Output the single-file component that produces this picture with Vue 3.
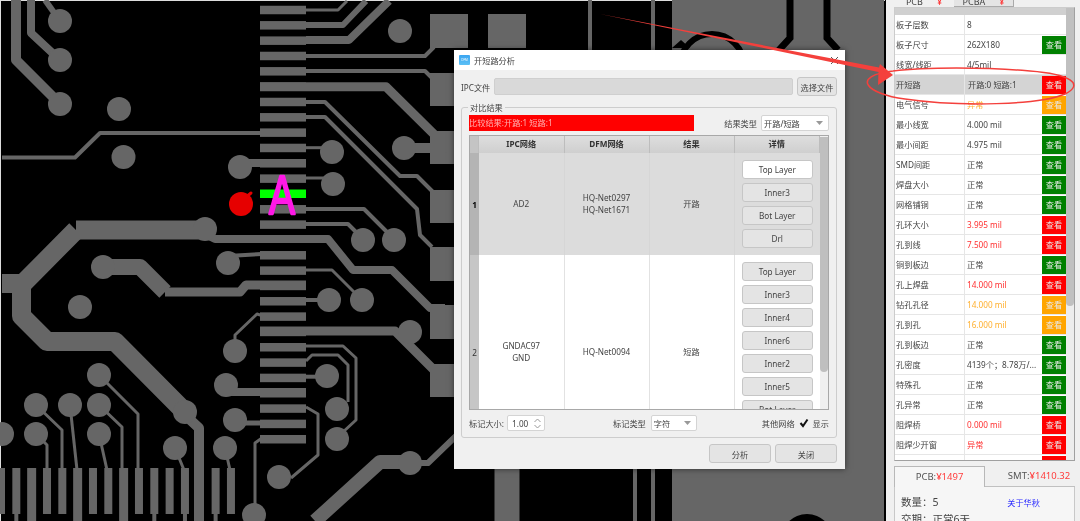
<script setup>
const gray = '#666666'

// pads on the vertical connector, pitch 15.33
const padRows = []
for (let i = 0; i < 29; i++) {
  if (i === 15 || i === 12) continue
  padRows.push(10 + i * 15.33)
}

// pads along the bottom edge
const bottomPads = []
for (let i = 0; i < 16; i++) {
  if (i === 13) continue
  const long = [1, 2, 5, 8, 10, 12, 14].includes(i)
  const wide = [2, 5, 8].includes(i)
  bottomPads.push({ x: 1 + i * 15.33, long, wide })
}

const vias = [
  [60, 21], [60, 60], [60, 104], [119, 109], [123.5, 157], [240, 167], [400, 31], [404, 148],
  [332, 152], [333, 184], [363, 240], [394, 240], [103, 267], [205, 229], [228, 263], [80, 307],
  [329, 300], [362, 300], [410, 332], [235, 351], [327, 376], [226, 385], [337, 409], [337, 439],
  [235, 420], [279, 477], [254, 515], [99, 375], [36, 405], [70, 405], [99, 405], [36, 434],
  [99, 434], [2, 434], [175, 448], [225, 448], [410, 463], [185, 412],
]

const traces = [
  [10, '16,0 16,60 60,104'],
  [8, '31,0 31,33 60,60'],
  [6, '45,0 60,21'],
  [4, '2,157.5 75,157.5 100,133 262,133'],
  [8, '240,163 306,163'],
  [3, '306,178 333,178'],
  [3, '306,147.7 332,147.7'],
  [3, '306,10 338,10 347,1'],
  [6, '306,25 343,25 366,1'],
  [8, '306,40 349,40 389,1'],
  [4, '306,56 425,56 434,47'],
  [4, '306,71 425,71 432,78'],
  [9, '260,86.7 386,86.7 456,156'],
  [10, '404,148 440,148'],
  [4, '306,102 325,102 400,176 417,176 433,192 445,192'],
  [4, '306,117 325,117 417,209 420,235 432,247'],
  [4, '306,209 364,209 388,233'],
  [4, '306,224 348,224 358,234'],
  [19, '76,230 21.5,285 21.5,316 47,341.5 115,341.5 185,412'],
  [19, '76,230 205,230'],
  [19, '2,283.5 25,283.5'],
  [8, '205,234 215,239 328,239 353,270 392,270 430,308 445,308'],
  [10, '185,415 199,428 199,521'],
  [16, '103,267 140,267 165,292'],
  [9, '165,292 240,292 246,285 306,285'],
  [4, '228,256 262,254'],
  [3, '306,270 332,270 362,300'],
  [4, '306,300 329,300'],
  [3, '262,315.7 257,314 235,335 235,345'],
  [9, '260,331 395,331 440,376'],
  [3, '306,346 343,346 356,358 356,420 343,432'],
  [3, '306,361 312,355 338,355 348,365 348,402'],
  [4, '306,376.7 327,376.7'],
  [8, '226,392 306,392'],
  [3, '306,407 318,414 318,455 291,478'],
  [5, '235,423 262,423'],
  [3, '262,438 255,443 255,505'],
  [3, '36,405 62,430 62,470'],
  [3, '36,434 47,445 47,470'],
  [3, '70,405 77,470'],
  [3, '99,405 122,427 122,470'],
  [3, '99,434 107,470'],
  [3, '99,375 138,414 138,470'],
  [3, '175,448 184,470'],
  [3, '225,448 230,470'],
  [14, '315,521 380,462 410,462'],
  [6, '410,463 428,463 456,436'],
  [4, '590,0 590,50'],
  [4, '653,0 653,50'],
  [4, '635,469 635,521'],
  [4, '653,469 653,521'],
  [25, '507,469 507,521'],
]

const blocks = [
  [430, 15, 30, 33], [430, 73, 30, 33], [430, 131, 30, 33], [430, 190, 30, 33], [430, 247, 30, 34],
  [430, 305, 30, 34], [430, 364, 30, 33], [430, 14, 38, 34], [488, 14, 38, 34],
]

const tableRows = [
  { no: 1, ipc: ['AD2'], dfm: ['HQ-Net0297', 'HQ-Net1671'], result: '开路', layers: ['Top Layer', 'Inner3', 'Bot Layer', 'Drl'] },
  { no: 2, ipc: ['GNDAC97', 'GND'], dfm: ['HQ-Net0094'], result: '短路', layers: ['Top Layer', 'Inner3', 'Inner4', 'Inner6', 'Inner2', 'Inner5', 'Bot Layer', 'Drl'] },
]

const checks = [
  { name: '板子层数', value: '8' },
  { name: '板子尺寸', value: '262X180', btn: 'green' },
  { name: '线宽/线距', value: '4/5mil' },
  { name: '开短路', value: '开路:0 短路:1', btn: 'red', active: true },
  { name: '电气信号', value: '异常', btn: 'orange', tone: 'orange' },
  { name: '最小线宽', value: '4.000 mil', btn: 'green' },
  { name: '最小间距', value: '4.975 mil', btn: 'green' },
  { name: 'SMD间距', value: '正常', btn: 'green' },
  { name: '焊盘大小', value: '正常', btn: 'green' },
  { name: '网格铺铜', value: '正常', btn: 'green' },
  { name: '孔环大小', value: '3.995 mil', btn: 'red', tone: 'red' },
  { name: '孔到线', value: '7.500 mil', btn: 'red', tone: 'red' },
  { name: '铜到板边', value: '正常', btn: 'green' },
  { name: '孔上焊盘', value: '14.000 mil', btn: 'red', tone: 'red' },
  { name: '钻孔孔径', value: '14.000 mil', btn: 'orange', tone: 'orange' },
  { name: '孔到孔', value: '16.000 mil', btn: 'orange', tone: 'orange' },
  { name: '孔到板边', value: '正常', btn: 'green' },
  { name: '孔密度', value: '4139个；8.78万/...', btn: 'green' },
  { name: '特殊孔', value: '正常', btn: 'green' },
  { name: '孔异常', value: '正常', btn: 'green' },
  { name: '阻焊桥', value: '0.000 mil', btn: 'red', tone: 'red' },
  { name: '阻焊少开窗', value: '异常', btn: 'red', tone: 'red' },
  { name: '', value: '', btn: 'red', tone: 'red' },
]
</script>

<template>
  <div class="app">
    <div class="canvas">
      <svg class="board" width="885" height="521" viewBox="0 0 885 521">
        <rect x="672" y="0" width="212" height="521" :fill="gray" />
        <rect v-for="b in blocks" :key="b.join()" :x="b[0]" :y="b[1]" :width="b[2]" :height="b[3]" :fill="gray" />
        <polyline
          v-for="t in traces"
          :key="t[1]"
          :points="t[1]"
          :stroke-width="t[0]"
          :stroke="gray"
          fill="none"
          stroke-linejoin="round" />
        <circle v-for="v in vias" :key="v.join()" :cx="v[0]" :cy="v[1]" r="12" :fill="gray" />
        <rect v-for="y in padRows" :key="y" x="260" :y="y - 4.25" width="46" height="8.5" :fill="gray" />
        <template v-for="p in bottomPads" :key="p.x">
          <rect :x="p.x - (p.wide ? 4.5 : 4)" y="468" :width="p.wide ? 9 : 8" height="46" :fill="gray" />
          <rect v-if="p.long" :x="p.x - (p.wide ? 4.5 : 2)" y="514" :width="p.wide ? 9 : 4" height="7" :fill="gray" />
        </template>
        <!-- copper pour cut-outs on the right -->
        <circle cx="712" cy="66" r="32" fill="none" stroke="#000" stroke-width="6" />
        <polyline points="790,0 790,38 779,50" fill="none" stroke="#000" stroke-width="7" />
        <polyline points="827,0 827,38 838,50" fill="none" stroke="#000" stroke-width="7" />
        <circle cx="807" cy="540" r="26" fill="#000" />
        <polygon points="672,48 690,48 681,40" fill="#000" />
        <rect x="260" y="189.5" width="46" height="8.5" fill="#00ff00" />
        <circle cx="241" cy="204" r="12" fill="#e60000" />
        <line x1="245" y1="198" x2="251" y2="193" stroke="#e60000" stroke-width="3" stroke-linecap="round" />
        <text x="269" y="214" class="mark" textLength="26" lengthAdjust="spacingAndGlyphs">A</text>
      </svg>

      <div class="dialog">
        <div class="titlebar">
          <span class="app-icon">DFM</span>
          <span class="title">开短路分析</span>
          <svg class="close" width="9" height="9" viewBox="0 0 9 9">
            <path d="M1 1 L8 8 M8 1 L1 8" stroke="#555" stroke-width="1" fill="none" />
          </svg>
        </div>
        <div class="dialog-body">
          <div class="file-row">
            <span class="lbl file-lbl">IPC文件</span>
            <div class="file-input"></div>
            <button class="btn file-btn">选择文件</button>
          </div>
          <div class="group">
            <span class="group-title">对比结果</span>
            <div class="result-row">
              <div class="result-bar">比较结果:开路:1 短路:1</div>
              <span class="lbl result-label">结果类型</span>
              <div class="select result-select">
                <span>开路/短路</span>
                <svg width="7" height="4" viewBox="0 0 7 4"><path d="M0 0 H7 L3.5 4 Z" fill="#999" /></svg>
              </div>
            </div>
            <div class="table">
              <div class="table-main">
                <div class="thead">
                  <div class="corner"></div>
                  <div>IPC网络</div>
                  <div>DFM网络</div>
                  <div>结果</div>
                  <div>详情</div>
                </div>
                <div class="tbody">
                  <div v-for="row in tableRows" :key="row.no" class="trow" :class="{ selected: row.no === 1 }">
                    <div class="rowhead">{{ row.no }}</div>
                    <div class="cell"><span v-for="n in row.ipc" :key="n">{{ n }}</span></div>
                    <div class="cell"><span v-for="n in row.dfm" :key="n">{{ n }}</span></div>
                    <div class="cell">{{ row.result }}</div>
                    <div class="cell layers">
                      <button
                        v-for="(l, i) in row.layers"
                        :key="l"
                        class="btn layer-btn"
                        :class="{ current: row.no === 1 && i === 0 }">{{ l }}</button>
                    </div>
                  </div>
                </div>
              </div>
              <div class="scrollbar"><div class="thumb"></div></div>
            </div>
            <div class="footer-row">
              <span class="lbl size-lbl">标记大小:</span>
              <div class="select spin">
                <span>1.00</span>
                <svg width="7" height="11" viewBox="0 0 7 11"><path d="M0.5 4 L3.5 1 L6.5 4 M0.5 7 L3.5 10 L6.5 7" stroke="#999" fill="none" /></svg>
              </div>
              <span class="lbl mark-type">标记类型</span>
              <div class="select mark-select">
                <span>字符</span>
                <svg width="7" height="4" viewBox="0 0 7 4"><path d="M0 0 H7 L3.5 4 Z" fill="#999" /></svg>
              </div>
              <span class="lbl other">其他网络</span>
              <svg class="check" width="10" height="10" viewBox="0 0 10 10">
                <path d="M1.5 5 L4 8 L8.5 1.5" stroke="#111" stroke-width="2" fill="none" />
              </svg>
              <span class="lbl">显示</span>
            </div>
          </div>
          <div class="actions">
            <button class="btn action-btn">分析</button>
            <button class="btn action-btn">关闭</button>
          </div>
        </div>
      </div>
    </div>

    <div class="panel">
      <div class="top-tabs">
        <div class="top-tab">PCB<em>¥</em></div>
        <div class="top-tab raised">PCBA<em>¥</em></div>
      </div>
      <div class="check-box">
        <div class="check-main">
          <div class="check-head"></div>
          <div class="check-rows">
            <div v-for="c in checks" :key="c.name" class="check-row" :class="{ active: c.active }">
              <div class="check-name">{{ c.name }}</div>
              <div class="check-value" :class="c.tone">{{ c.value }}</div>
              <div class="check-action">
                <span v-if="c.btn" class="view" :class="c.btn">查看</span>
              </div>
            </div>
          </div>
        </div>
        <div class="check-scroll"><div class="check-thumb"></div></div>
      </div>
      <div class="price-tabs">
        <div class="price-tab on">PCB:<em>¥1497</em></div>
        <div class="price-tab smt">SMT:<em>¥1410.32</em></div>
      </div>
      <div class="price-box">
        <div class="qty-row">
          <span>数量：5</span>
          <a class="about">关于华秋</a>
        </div>
        <div class="qty-row">交期：正常6天</div>
      </div>
    </div>

    <svg class="annotation" width="1080" height="521" viewBox="0 0 1080 521">
      <polygon points="600,14 879,67.5 880,64 893,75 878,85 878.5,72" fill="#f4403c" />
      <path
        d="M893 71 C 850 76, 866 94, 905 99 C 960 107, 1040 105, 1065 94 C 1085 84, 1070 74, 1030 71 C 985 67, 925 67, 893 71"
        fill="none"
        stroke="#f4403c"
        stroke-width="1.5" />
    </svg>
  </div>
</template>

<style>
html, body {
  margin: 0;
  background: #f0f0f0;
}
</style>

<style scoped>
.app {
  position: relative;
  display: flex;
  width: 1080px;
  height: 521px;
  overflow: hidden;
  font-family: "Noto Sans", "Noto Sans CJK SC", sans-serif;
  font-size: 8.2px;
  color: #333;
  filter: blur(0.45px);
}

.canvas {
  position: relative;
  flex: 0 0 885px;
  height: 521px;
  background: #000;
  border-right: 1px solid #000;
  box-sizing: border-box;
  box-shadow: inset 1px 1px 0 #ddd;
}

.board {
  display: block;
}

.mark {
  font-family: "Liberation Sans", sans-serif;
  font-size: 55px;
  fill: #ff19e6;
  stroke: #ff19e6;
  stroke-width: 2.5px;
  stroke-linejoin: round;
}

.annotation {
  position: absolute;
  left: 0;
  top: 0;
  pointer-events: none;
}

.dialog {
  position: absolute;
  left: 454px;
  top: 50px;
  width: 391px;
  height: 419px;
  background: #f0f0f0;
  box-shadow: 0 0 6px rgba(0, 0, 0, 0.55);
  display: flex;
  flex-direction: column;
}

.titlebar {
  height: 20px;
  flex: none;
  background: #fff;
  display: flex;
  align-items: center;
  padding: 0 5px;
  gap: 4px;
}

.app-icon {
  width: 11px;
  height: 10px;
  background: linear-gradient(#3ba5f0, #5cc0f5);
  border-radius: 1px;
  color: #fff;
  font-size: 3px;
  line-height: 10px;
  text-align: center;
}

.title {
  font-size: 8.2px;
  color: #444;
}

.close {
  margin-left: auto;
  margin-right: 1px;
}

.dialog-body {
  flex: 1;
  padding: 7px 8px 0 7px;
  display: flex;
  flex-direction: column;
}

.lbl {
  white-space: nowrap;
  font-size: 8.2px;
  color: #444;
}

.file-row {
  display: flex;
  align-items: center;
  height: 19px;
}

.file-lbl {
  flex: 0 0 33px;
}

.file-input {
  flex: 1;
  height: 17px;
  background: #d9d9d9;
  border: 1px solid #cfcfcf;
  border-radius: 2px;
  box-sizing: border-box;
}

.btn {
  font: inherit;
  color: #444;
  background: #e4e4e4;
  border: 1px solid #c6c6c6;
  border-radius: 3px;
  padding: 0;
  box-sizing: border-box;
}

.file-btn {
  flex: 0 0 40px;
  height: 19px;
  margin-left: 4px;
}

.group {
  position: relative;
  margin-top: 11px;
  height: 331px;
  box-sizing: border-box;
  border: 1px solid #cdcdcd;
  border-radius: 3px;
  padding: 7px 7px 0;
  display: flex;
  flex-direction: column;
}

.group-title {
  position: absolute;
  left: 6px;
  top: -6px;
  padding: 0 2px;
  background: #f0f0f0;
  font-size: 8.2px;
  line-height: 11px;
  color: #444;
}

.result-row {
  display: flex;
  align-items: center;
  height: 16px;
  flex: none;
}

.result-bar {
  flex: 0 0 225px;
  height: 16px;
  line-height: 16px;
  background: #ff0000;
  color: #ffb0b0;
  white-space: nowrap;
}

.result-label {
  margin-left: auto;
}

.select {
  height: 16px;
  box-sizing: border-box;
  background: #fff;
  border: 1px solid #d4d4d4;
  border-radius: 2px;
  display: flex;
  align-items: center;
  justify-content: space-between;
  padding: 0 5px 0 2px;
  color: #444;
}

.result-select {
  flex: 0 0 68px;
  margin-left: 4px;
}

.table {
  display: flex;
  margin-top: 4px;
  height: 275px;
  flex: none;
  box-sizing: border-box;
  border: 1px solid #a8a8a8;
  background: #fff;
}

.table-main {
  flex: 1;
  min-width: 0;
  display: flex;
  flex-direction: column;
}

.thead,
.trow {
  display: grid;
  grid-template-columns: 9px 85.5px 85px 85px 1fr;
}

.thead {
  height: 17px;
  flex: none;
  font-weight: 700;
  color: #333;
  background: linear-gradient(#dedede, #cfcfcf);
  text-align: center;
  line-height: 16px;
}

.thead > div {
  border-right: 1px solid #bdbdbd;
}

.corner {
  background: #c4c4c4;
}

.tbody {
  flex: 1;
  overflow: hidden;
}

.trow.selected {
  background: #dcdcdc;
}

.rowhead {
  background: #c6c6c6;
  display: flex;
  align-items: center;
  justify-content: center;
  color: #333;
}

.selected .rowhead {
  background: #b4b4b4;
  font-weight: 700;
  color: #000;
}

.cell {
  display: flex;
  flex-direction: column;
  align-items: center;
  justify-content: center;
  border-right: 1px solid #e2e2e2;
  line-height: 11.7px;
  color: #444;
}

.selected .cell {
  border-right-color: #d6d6d6;
}

.layers {
  padding: 7px 0;
  gap: 4px;
  border-right: 0;
}

.layer-btn {
  width: 71px;
  height: 19px;
  flex: none;
  background: #e4e4e4;
}

.layer-btn.current {
  background: #fff;
}

.scrollbar {
  width: 8px;
  flex: none;
  background: #f0f0f0;
  padding-top: 1px;
}

.thumb {
  height: 235px;
  background: #bfbfbf;
  border-radius: 0 0 4px 4px;
}

.footer-row {
  display: flex;
  align-items: center;
  margin-top: 5px;
  height: 16px;
  flex: none;
}

.size-lbl {
  flex: 0 0 38px;
}

.spin {
  flex: 0 0 38px;
  padding: 0 3px 0 4px;
}

.mark-type {
  margin-left: 68px;
}

.mark-select {
  flex: 0 0 46px;
  margin-left: 5px;
}

.other {
  margin-left: auto;
}

.check {
  margin: 0 4px;
}

.actions {
  display: flex;
  justify-content: flex-end;
  gap: 4px;
  margin-top: 6px;
}

.action-btn {
  width: 62px;
  height: 19px;
}

.panel {
  flex: 1;
  min-width: 0;
  display: flex;
  flex-direction: column;
  background: #f0f0f0;
  padding-left: 8px;
  padding-right: 5px;
}

.top-tabs {
  display: flex;
  height: 7px;
  flex: none;
  overflow: hidden;
}

.top-tab {
  width: 60px;
  text-align: center;
  line-height: 0;
  padding-top: 2px;
  font-size: 9px;
  color: #444;
}

.top-tab em {
  color: #ff3030;
  font-style: normal;
  margin-left: 14px;
}

.top-tab.raised {
  background: #e4e4e4;
  border-right: 1px solid #aaa;
  border-bottom: 1px solid #aaa;
  box-sizing: border-box;
}

.check-box {
  display: flex;
  height: 454px;
  flex: none;
  box-sizing: border-box;
  border: 1px solid #a0a0a0;
  border-left-color: #ccc;
  border-top-color: #ccc;
  background: #fff;
}

.check-main {
  flex: 1;
  min-width: 0;
  display: flex;
  flex-direction: column;
}

.check-head {
  height: 7px;
  flex: none;
  background: #d0d0d0;
}

.check-rows {
  flex: 1;
  overflow: hidden;
}

.check-row {
  display: grid;
  grid-template-columns: 70px 76px 1fr;
  height: 20px;
  box-sizing: border-box;
  border-bottom: 1px solid #e6e6e6;
  align-items: stretch;
}

.check-row.active {
  background: #d4d4d4;
}

.check-name {
  padding-left: 1px;
  line-height: 19px;
  border-right: 1px solid #e6e6e6;
  color: #444;
  white-space: nowrap;
}

.check-value {
  padding-left: 2px;
  line-height: 19px;
  white-space: nowrap;
  color: #444;
}

.active .check-value {
  padding-left: 3px;
}

.check-value.red {
  color: #ff3030;
}

.check-value.orange {
  color: #ffb030;
}

.check-action {
  padding: 1px 0 1px 1px;
}

.view {
  display: block;
  height: 17.5px;
  line-height: 17.5px;
  text-align: center;
  color: #e8e8e8;
}

.view.green {
  background: #008000;
}

.view.red {
  background: #ff0000;
}

.view.orange {
  background: #ffa500;
}

.check-scroll {
  width: 8px;
  flex: none;
  background: #ededed;
}

.check-thumb {
  height: 298px;
  background: #c0c0c0;
  border-radius: 0 0 4px 4px;
}

.price-tabs {
  display: flex;
  margin-top: 5px;
  height: 21px;
  flex: none;
  font-size: 9.5px;
}

.price-tab {
  flex: 1;
  box-sizing: border-box;
  text-align: center;
  line-height: 20px;
  color: #555;
  border-bottom: 1px solid #c0c0c0;
  white-space: nowrap;
}

.price-tab.on {
  flex: 0 0 91px;
  background: #f6f6f6;
  border: 1px solid #b8b8b8;
  border-bottom: 0;
}

.price-tab.smt {
  padding-left: 18px;
}

.price-tab em {
  font-style: normal;
  color: #ff3b3b;
}

.price-box {
  flex: 1;
  background: #f6f6f6;
  border-left: 1px solid #c8c8c8;
  border-right: 1px solid #c8c8c8;
  padding: 7px 6px 0;
  font-size: 10.5px;
  color: #444;
  overflow: hidden;
}

.qty-row {
  display: flex;
  height: 17px;
  line-height: 17px;
  white-space: nowrap;
}

.about {
  margin-left: auto;
  margin-right: 28px;
  font-size: 8.2px;
  color: #2a2aff;
}
</style>
